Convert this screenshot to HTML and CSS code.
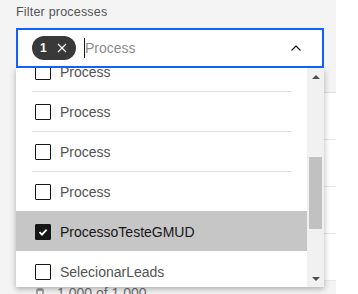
FILE: index.html
```html
<!DOCTYPE html>
<html>
<head>
<meta charset="utf-8">
<link rel="stylesheet" href="styles.css">
</head>
<body>
<div class="main">
  <div class="label">Filter processes</div>
  <div class="field-wrap">
    <div class="field">
      <span class="tag">
        <span class="tag-count">1</span>
        <span class="tag-close">
          <svg width="10" height="10" viewBox="0 0 10 10"><path d="M1 1 L9 9 M9 1 L1 9" stroke="#fff" stroke-width="1.2" fill="none"/></svg>
        </span>
      </span>
      <span class="cursor"></span>
      <span class="placeholder">Process</span>
      <svg class="chevron" width="16" height="16" viewBox="0 0 16 16"><path d="M3.5 10.5 L8 6 L12.5 10.5" stroke="#161616" stroke-width="1.2" fill="none"/></svg>
    </div>
    <div class="menu">
      <div class="list">
        <div class="items">
          <div class="item"><div class="item-inner first"><span class="box"></span><span class="text">Process</span></div></div>
          <div class="item"><div class="item-inner"><span class="box"></span><span class="text">Process</span></div></div>
          <div class="item"><div class="item-inner"><span class="box"></span><span class="text">Process</span></div></div>
          <div class="item"><div class="item-inner"><span class="box"></span><span class="text">Process</span></div></div>
          <div class="item selected"><div class="item-inner"><span class="box checked"><svg width="12" height="12" viewBox="0 0 12 12"><path d="M2.5 6.2 L5 8.6 L9.6 3.6" stroke="#fff" stroke-width="1.8" fill="none"/></svg></span><span class="text">ProcessoTesteGMUD</span></div></div>
          <div class="item after-selected"><div class="item-inner"><span class="box"></span><span class="text">SelecionarLeads</span></div></div>
        </div>
      </div>
      <div class="scrollbar">
        <div class="sb-btn"><span class="arrow-up"></span></div>
        <div class="sb-track"><div class="sb-thumb"></div></div>
        <div class="sb-btn"><span class="arrow-down"></span></div>
      </div>
    </div>
  </div>
  <div class="table">
    <div class="row"></div>
    <div class="row"></div>
    <div class="row"></div>
    <div class="row"></div>
  </div>
  <div class="footer">
    <svg class="footer-icon" width="10" height="12" viewBox="0 0 10 12"><path d="M1 2 H9 M3 2 V1 H7 V2 M2 3 V11 H8 V3" stroke="#8d8d8d" stroke-width="1.4" fill="none"/></svg>
    <span class="footer-text">1,000 of 1,000</span>
  </div>
</div>
<div class="side"></div>
</body>
</html>
```
FILE: styles.css
```css
html, body {
  margin: 0;
  padding: 0;
}
body {
  width: 358px;
  height: 294px;
  overflow: hidden;
  display: flex;
  background: #f4f4f4;
  font-family: "Liberation Sans", Arial, sans-serif;
}
.main {
  width: 336px;
  flex: none;
  background: #f4f4f4;
}
.side {
  flex: 1;
  background: #ffffff;
}
.label {
  padding: 4px 16px 0;
  height: 24px;
  font-size: 12.5px;
  letter-spacing: 0.2px;
  line-height: 16px;
  color: #525252;
}
.field-wrap {
  position: relative;
  margin-left: 16px;
  width: 308px;
  z-index: 2;
}
.field {
  height: 40px;
  box-sizing: border-box;
  border: 2px solid #0f62fe;
  background: #ffffff;
  display: flex;
  align-items: center;
  padding-left: 14px;
  position: relative;
  z-index: 3;
}
.tag {
  display: flex;
  align-items: center;
  height: 24px;
  width: 44px;
  box-sizing: border-box;
  border-radius: 12px;
  background: #393939;
  padding-left: 8px;
  margin-top: -1px;
}
.tag-count {
  color: #ffffff;
  font-size: 12px;
  font-weight: bold;
  line-height: 16px;
  width: 8px;
}
.tag-close {
  display: flex;
  align-items: center;
  justify-content: center;
  width: 18px;
  height: 18px;
  margin-left: 5px;
}
.cursor {
  width: 1px;
  height: 20px;
  background: #161616;
  margin-left: 8px;
}
.placeholder {
  font-size: 14px;
  color: #8d8d8d;
}
.chevron {
  margin-left: auto;
  margin-right: 18px;
}
.menu {
  position: absolute;
  top: 40px;
  left: 0;
  width: 308px;
  height: 219px;
  background: #ffffff;
  box-shadow: 0 2px 6px rgba(0, 0, 0, 0.3);
  display: flex;
  overflow: hidden;
}
.list {
  flex: 1;
  overflow: hidden;
}
.items {
  margin-top: -17px;
}
.item {
  height: 40px;
  padding: 0 16px;
}
.item-inner {
  height: 40px;
  box-sizing: border-box;
  border-top: 1px solid #e0e0e0;
  display: flex;
  align-items: center;
  padding-left: 3px;
}
.item-inner.first {
  border-top-color: transparent;
}
.item.selected {
  background: #c6c6c6;
}
.item.selected .item-inner,
.item.after-selected .item-inner {
  border-top-color: transparent;
}
.box {
  width: 16px;
  height: 16px;
  box-sizing: border-box;
  border: 1.5px solid #161616;
  border-radius: 1px;
  display: flex;
  align-items: center;
  justify-content: center;
  flex: none;
}
.box.checked {
  background: #161616;
}
.text {
  margin-left: 9px;
  font-size: 14px;
  color: #525252;
}
.selected .text {
  color: #161616;
}
.scrollbar {
  width: 17px;
  flex: none;
  background: #f1f1f1;
  display: flex;
  flex-direction: column;
}
.sb-btn {
  height: 17px;
  display: flex;
  align-items: center;
  justify-content: center;
}
.arrow-up {
  width: 0;
  height: 0;
  border-left: 4px solid transparent;
  border-right: 4px solid transparent;
  border-bottom: 4px solid #505050;
}
.arrow-down {
  width: 0;
  height: 0;
  border-left: 4px solid transparent;
  border-right: 4px solid transparent;
  border-top: 4px solid #505050;
}
.sb-track {
  flex: 1;
}
.sb-thumb {
  margin: 72px 2px 0;
  height: 72px;
  background: #c1c1c1;
}
.table {
  margin: 24px 0 0 16px;
  background: #ffffff;
  border-top: 1px solid #e0e0e0;
}
.row {
  height: 46px;
  border-bottom: 1px solid #e8e8e8;
}
.footer {
  display: flex;
  align-items: flex-start;
  padding: 5px 0 0 35px;
}
.footer-icon {
  margin-top: 2px;
}
.footer-text {
  margin-left: 12px;
  font-size: 14px;
  line-height: 14px;
  color: #6f6f6f;
}
```
